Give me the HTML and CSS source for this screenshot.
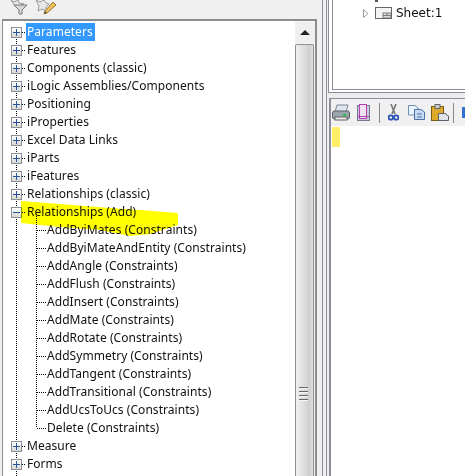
FILE: index.html
```html
<!DOCTYPE html>
<html>
<head>
<meta charset="utf-8">
<title>iLogic snippets</title>
<link rel="stylesheet" href="styles.css">
</head>
<body>
<div class="app">
  <section class="left">
    <div class="snip-bar">
      <svg class="tool-ico" width="18" height="15" viewBox="0 0 18 15"><path d="M1 0 L4 2 L8 0 L9 3 L14 4 L10 6 L5 6 Z" fill="#e8e8e8" stroke="#9a9a9a"/><path d="M4 5 H17 L12 10 V14 H9 V10 Z" fill="#d8d8d8" stroke="#777"/></svg>
      <svg class="tool-ico" width="20" height="15" viewBox="0 0 20 15"><path d="M0 0 L4 2 L8 0 L10 3 L13 4 L10 7 L10 11 L6 9 L2 11 L3 6 Z" fill="#e8e8e8" stroke="#9a9a9a"/><path d="M8 14 L9 11 L17 2 L20 5 L11 13 Z" fill="#f0c060" stroke="#a07830"/><path d="M8 14 L9 11 L11 13 Z" fill="#555"/></svg>
    </div>
    <div class="tree-frame">
      <div class="tree">
        <div class="row"><i class="box plus"></i><i class="dash"></i><span class="label selected">Parameters</span></div>
        <div class="row"><i class="box plus"></i><i class="dash"></i><span class="label">Features</span></div>
        <div class="row"><i class="box plus"></i><i class="dash"></i><span class="label">Components (classic)</span></div>
        <div class="row"><i class="box plus"></i><i class="dash"></i><span class="label">iLogic Assemblies/Components</span></div>
        <div class="row"><i class="box plus"></i><i class="dash"></i><span class="label">Positioning</span></div>
        <div class="row"><i class="box plus"></i><i class="dash"></i><span class="label">iProperties</span></div>
        <div class="row"><i class="box plus"></i><i class="dash"></i><span class="label">Excel Data Links</span></div>
        <div class="row"><i class="box plus"></i><i class="dash"></i><span class="label">iParts</span></div>
        <div class="row"><i class="box plus"></i><i class="dash"></i><span class="label">iFeatures</span></div>
        <div class="row"><i class="box plus"></i><i class="dash"></i><span class="label">Relationships (classic)</span></div>
        <div class="row"><i class="box"></i><i class="dash"></i><span class="label">Relationships (Add)</span></div>
        <div class="kids">
          <div class="row"><i class="dash long"></i><span class="label">AddByiMates (Constraints)</span></div>
          <div class="row"><i class="dash long"></i><span class="label">AddByiMateAndEntity (Constraints)</span></div>
          <div class="row"><i class="dash long"></i><span class="label">AddAngle (Constraints)</span></div>
          <div class="row"><i class="dash long"></i><span class="label">AddFlush (Constraints)</span></div>
          <div class="row"><i class="dash long"></i><span class="label">AddInsert (Constraints)</span></div>
          <div class="row"><i class="dash long"></i><span class="label">AddMate (Constraints)</span></div>
          <div class="row"><i class="dash long"></i><span class="label">AddRotate (Constraints)</span></div>
          <div class="row"><i class="dash long"></i><span class="label">AddSymmetry (Constraints)</span></div>
          <div class="row"><i class="dash long"></i><span class="label">AddTangent (Constraints)</span></div>
          <div class="row"><i class="dash long"></i><span class="label">AddTransitional (Constraints)</span></div>
          <div class="row"><i class="dash long"></i><span class="label">AddUcsToUcs (Constraints)</span></div>
          <div class="row"><i class="dash long"></i><span class="label">Delete (Constraints)</span></div>
        </div>
        <div class="row"><i class="box plus"></i><i class="dash"></i><span class="label">Measure</span></div>
        <div class="row"><i class="box plus"></i><i class="dash"></i><span class="label">Forms</span></div>
      </div>
      <div class="scrollbar">
        <div class="scroll-up"><i class="arrow"></i></div>
        <div class="thumb"><div class="grip"><i></i><i></i><i></i><i></i></div></div>
      </div>
    </div>
    <svg class="marker" width="180" height="50" viewBox="0 0 180 50"><path d="M21 1 L60 4 L110 8 L140 10 L178 13 L178 25 L150 34 L130 36 L100 30 L60 27 L21 23 Z" fill="#ffff00"/></svg>
  </section>
  <div class="gutter"><i></i><i></i></div>
  <section class="right">
    <div class="model-outer">
      <div class="model-pane">
        <i class="stub"></i>
        <div class="node">
          <svg width="6" height="9" viewBox="0 0 6 9" class="twisty"><path d="M.5 .5 L5 4.5 L.5 8.5 Z" fill="#fff" stroke="#999"/></svg>
          <svg width="17" height="12" viewBox="0 0 17 12" class="sheet"><rect x=".5" y=".5" width="16" height="11" fill="#f4f4f4" stroke="#666"/><rect x="8" y="6" width="8" height="5" fill="#ddd" stroke="#666" stroke-width=".8"/><path d="M8 8.5H16M12 6V8.5" stroke="#666" stroke-width=".8"/></svg>
          <span class="node-text">Sheet:1</span>
        </div>
      </div>
    </div>
    <div class="edit-strip"></div>
    <div class="editor-frame">
      <div class="edit-bar">
        <svg class="i-print" width="18" height="17" viewBox="0 0 18 17"><path d="M5 1 H16 L14 8 H3 Z" fill="#dfe6ee" stroke="#7d8894"/><rect x=".5" y="7" width="17" height="8" rx="2" fill="#9aa4ae" stroke="#566069"/><rect x="3" y="13" width="12" height="3" fill="#e8e8e8" stroke="#666"/><rect x="11" y="10" width="3" height="2" fill="#27c24c"/></svg>
        <svg class="i-book" width="13" height="17" viewBox="0 0 13 17"><rect x=".5" y="1.5" width="12" height="15" fill="#c9ccdc" stroke="#767a90"/><rect x="2.5" y=".5" width="7" height="14" fill="#f0e0f0" stroke="#b040b0"/><path d="M1 12.5H12" stroke="#b040b0"/></svg>
        <i class="sep s1"></i>
        <svg class="i-cut" width="11" height="17" viewBox="0 0 11 17"><path d="M3 0 L7 10 M8 0 L4 10" stroke="#777" stroke-width="1.6" fill="none"/><circle cx="2.8" cy="13.5" r="2.2" fill="none" stroke="#2c52b8" stroke-width="1.8"/><circle cx="8.2" cy="13.5" r="2.2" fill="none" stroke="#2c52b8" stroke-width="1.8"/></svg>
        <svg class="i-copy" width="17" height="15" viewBox="0 0 17 15"><path d="M.5 .5 H7 L10 3 V10 H.5 Z" fill="#eaf2fb" stroke="#6f8fb5"/><path d="M6.5 4.5 H13 L16.5 7 V14.5 H6.5 Z" fill="#c7dcf3" stroke="#4a70a8"/><path d="M9 9H14M9 12H14" stroke="#4a70a8"/></svg>
        <svg class="i-paste" width="18" height="17" viewBox="0 0 18 17"><rect x=".5" y="2.5" width="12" height="14" fill="#dca92b" stroke="#7a5a10"/><rect x="4" y=".5" width="5" height="4" fill="#ccc" stroke="#666"/><path d="M7.5 9.5 H14 L17.5 12 V16.5 H7.5 Z" fill="#dfe4ea" stroke="#59616b"/></svg>
        <i class="sep s2"></i>
        <i class="clip-ico"></i>
      </div>
      <div class="editor"><i class="line-mark"></i></div>
    </div>
  </section>
</div>
</body>
</html>
```
FILE: styles.css
```css
html, body { margin: 0; padding: 0; }
body { font-family: "Noto Sans", sans-serif; font-size: 12px; letter-spacing: 0.05px; color: #111; background: #f0f0f0; }
i { display: block; }
.app { display: flex; width: 465px; height: 476px; overflow: hidden; }

.left { position: relative; width: 317px; flex: none; padding-left: 2px; box-sizing: border-box; display: flex; flex-direction: column; }
.snip-bar { height: 19px; flex: none; display: flex; gap: 8px; padding-left: 8px; align-items: flex-start; }
.tree-frame { flex: 1; display: flex; min-height: 0; background: #fff; border: solid #8c8c8c; border-width: 2px 2px 0 1px; }
.tree { flex: 1; min-width: 0; padding-top: 2px; position: relative; overflow: hidden; }
.tree::before { content: ""; position: absolute; left: 13px; top: 10px; bottom: 0; width: 1px; background: linear-gradient(#000 50%, transparent 50%) 0 0 / 1px 2px; }
.row { height: 18px; display: flex; align-items: center; position: relative; padding-left: 8px; white-space: nowrap; }
.box { position: relative; width: 9px; height: 9px; flex: none; border: 1px solid #8a8f98; background: linear-gradient(#fff, #d8d8d0); margin-top: 1px; }
.box::before { content: ""; position: absolute; left: 1px; right: 1px; top: 4px; height: 1px; background: #2a4f9c; }
.plus::after { content: ""; position: absolute; top: 1px; bottom: 1px; left: 4px; width: 1px; background: #2a4f9c; }
.dash { width: 4px; height: 1px; flex: none; margin-top: 1px; background: linear-gradient(90deg, #000 50%, transparent 50%) 0 0 / 2px 1px; }
.dash.long { width: 9px; margin-left: 1px; }
.label { padding: 0 1px; line-height: 18px; }
.selected { background: #3399ff; color: #fff; padding-right: 2px; }
.kids { position: relative; padding-left: 25px; }
.kids::before { content: ""; position: absolute; left: 33px; top: -7px; bottom: 9px; width: 1px; background: linear-gradient(#000 50%, transparent 50%) 0 0 / 1px 2px; }

.scrollbar { width: 20px; flex: none; background: #f4f4f4; padding-top: 1px; display: flex; flex-direction: column; gap: 1px; }
.scroll-up { height: 21px; flex: none; display: flex; align-items: center; justify-content: center; background: #efefef; }
.arrow { width: 0; height: 0; border: solid transparent; border-width: 0 5px 5px; border-bottom-color: #222; }
.thumb { flex: 1; border: 1px solid #8e8e8e; border-bottom: 0; border-radius: 2px 2px 0 0; margin-right: 1px; background: linear-gradient(90deg, #f0f0f0, #e2e2e2 35%, #cfcfcf 80%, #e2e2e2); display: flex; flex-direction: column; align-items: center; padding-top: 342px; box-sizing: border-box; }
.grip { width: 9px; display: flex; flex-direction: column; gap: 2px; margin-right: 2px; }
.grip i { height: 1px; background: #666; border-bottom: 1px solid #f6f6f6; }
.marker { position: absolute; left: 0; top: 200px; mix-blend-mode: multiply; }

.gutter { width: 11px; flex: none; display: flex; gap: 3px; padding-left: 5px; box-sizing: border-box; }
.gutter i { width: 1px; background: #8c8c9c; }
.right { flex: 1; min-width: 0; display: flex; flex-direction: column; }
.model-outer { height: 93px; flex: none; box-sizing: border-box; background: #fff; border: solid #8c8c9c; border-width: 0 0 1px 1px; padding: 0 0 2px 3px; display: flex; }
.model-pane { flex: 1; position: relative; box-sizing: border-box; border: solid #8c8c9c; border-width: 0 0 1px 1px; padding: 5px 0 0 30px; }
.stub { position: absolute; left: 42px; top: 0; width: 3px; height: 2px; background: #555; }
.node { display: flex; align-items: center; }
.twisty { margin-right: 6px; }
.sheet { margin-right: 4px; }
.node-text { font-family: "DejaVu Sans", sans-serif; font-size: 12px; letter-spacing: 0; line-height: 16px; }
.edit-strip { height: 5px; flex: none; background: #ececec; }
.editor-frame { flex: 1; display: flex; flex-direction: column; margin-left: 1px; border-left: 2px solid #8c8c9c; border-top: 1px solid #8c8c9c; min-height: 0; }
.edit-bar { height: 27px; flex: none; display: flex; align-items: center; box-sizing: border-box; background: #f0f0f0; overflow: hidden; }
.i-print { margin-left: 1px; flex: none; }
.i-book { margin-left: 7px; flex: none; }
.i-cut { margin-left: 8px; flex: none; }
.i-copy { margin-left: 9px; flex: none; }
.i-paste { margin-left: 6px; flex: none; }
.sep { width: 1px; height: 20px; background: #888; flex: none; }
.s1 { margin-left: 9px; }
.s2 { margin-left: 4px; }
.clip-ico { width: 12px; height: 11px; margin-left: 8px; background: #3070d0; flex: none; }
.editor { flex: 1; background: #fff; padding-top: 1px; }
.line-mark { width: 8px; height: 20px; background: #ffee66; margin-left: 1px; }
```
